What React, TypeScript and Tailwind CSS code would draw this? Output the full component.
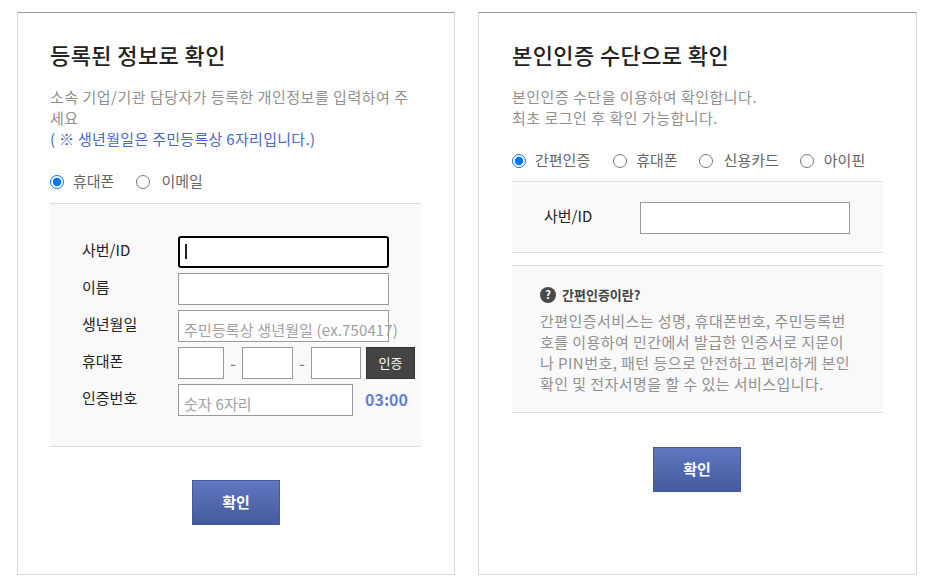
import type { ReactNode } from "react";

const font = "font-['Noto_Sans_CJK_KR','Noto_Sans',sans-serif]";

function Radio({ label, checked, name, className, labelClass = "ml-[9px]" }: { label: string; checked?: boolean; name: string; className?: string; labelClass?: string }) {
  return (
    <label className={`flex items-center text-[15px] text-[#666] ${className ?? ""}`}>
      <input type="radio" name={name} defaultChecked={checked} className="m-0 h-[14px] w-[14px]" />
      <span className={`leading-[16px] -mt-[3px] ${labelClass}`}>{label}</span>
    </label>
  );
}

function Field({ label, children }: { label: string; children: ReactNode }) {
  return (
    <div className="flex h-[32px] items-center">
      <span className="w-[96px] text-[15px] leading-[16px] -mt-[4px] text-[#222]">{label}</span>
      {children}
    </div>
  );
}

function TextBox({ className, hint }: { className: string; hint?: string }) {
  return (
    <div className={`relative h-[32px] shrink-0 border border-[#999] bg-white ${className}`}>
      {hint && (
        <span className="absolute left-[5px] top-[9px] whitespace-nowrap text-[15px] leading-[20px] tracking-[0.15px] text-[#a0a0a0]">{hint}</span>
      )}
    </div>
  );
}

function ConfirmButton() {
  return (
    <button className="flex h-[45px] w-[88px] items-center justify-center border border-[#46599f] bg-gradient-to-b from-[#5f78c0] to-[#465a9f] text-[15px] font-bold text-white">
      확인
    </button>
  );
}

export default function App() {
  return (
    <div className={`flex h-[587px] w-[939px] gap-[23px] bg-white pl-[17px] pt-[12px] ${font}`}>
      {/* 등록된 정보 */}
      <section className="flex h-[563px] w-[438px] flex-col border border-t-[#999] border-[#d9d9d9] pl-[32px]">
        <h2 className="mt-[26px] text-[22px] font-medium leading-[30px] tracking-[0.4px] text-[#222]">등록된 정보로 확인</h2>
        <p className="mt-[17px] w-[362px] text-[15px] leading-[21px] tracking-[0.5px] text-[#909090]">
          소속 기업/기관 담당자가 등록한 개인정보를 입력하여 주세요
          <br />
          <span className="tracking-[0.3px] text-[#4a68c4]">( ※ 생년월일은 주민등록상 6자리입니다.)</span>
        </p>
        <div className="mt-[23px] flex h-[20px] items-center">
          <Radio name="a" label="휴대폰" checked className="mr-[22px]" />
          <Radio name="a" label="이메일" labelClass="ml-[11px]" />
        </div>
        <div className="mt-[11px] flex h-[244px] w-[371px] flex-col gap-[5px] border-y border-[#ddd] bg-[#f9f9f9] pl-[32px] pt-[32px]">
          <Field label="사번/ID">
            <div className="relative h-[32px] w-[211px] rounded-[3px] border-2 border-black bg-white">
              <span className="absolute left-[5px] top-[6px] h-[15px] w-[2px] bg-[#222]" />
            </div>
          </Field>
          <Field label="이름">
            <TextBox className="w-[211px]" />
          </Field>
          <Field label="생년월일">
            <TextBox className="w-[211px]" hint="주민등록상 생년월일 (ex.750417)" />
          </Field>
          <Field label="휴대폰">
            <TextBox className="w-[46px]" />
            <span className="w-[18px] text-center text-[17px] text-[#777]">-</span>
            <TextBox className="w-[51px]" />
            <span className="w-[18px] text-center text-[17px] text-[#777]">-</span>
            <TextBox className="w-[50px]" />
            <button className="ml-[5px] h-[32px] w-[49px] shrink-0 border border-[#333] bg-[#444] text-[13px] text-white">인증</button>
          </Field>
          <Field label="인증번호">
            <TextBox className="w-[175px]" hint="숫자 6자리" />
            <span className="ml-[12px] text-[16px] font-bold -mt-[2px] text-[#6480cc]">03:00</span>
          </Field>
        </div>
        <div className="mt-[33px] ml-[142px]">
          <ConfirmButton />
        </div>
      </section>

      {/* 본인인증 수단 */}
      <section className="flex h-[563px] w-[439px] flex-col border border-t-[#999] border-[#d9d9d9] pl-[33px]">
        <h2 className="mt-[26px] text-[22px] font-medium leading-[30px] tracking-[0.4px] text-[#222]">본인인증 수단으로 확인</h2>
        <p className="mt-[17px] text-[15px] leading-[21px] tracking-[0.5px] text-[#909090]">
          본인인증 수단을 이용하여 확인합니다.
          <br />
          최초 로그인 후 확인 가능합니다.
        </p>
        <div className="mt-[23px] flex h-[20px] items-center">
          <Radio name="b" label="간편인증" checked className="mr-[23px]" />
          <Radio name="b" label="휴대폰" className="mr-[21px]" />
          <Radio name="b" label="신용카드" className="mr-[21px]" labelClass="ml-[11px]" />
          <Radio name="b" label="아이핀" labelClass="ml-[10px]" />
        </div>
        <div className="mt-[10px] flex h-[72px] w-[371px] items-center border-y border-[#ddd] bg-[#f9f9f9] pl-[32px] pt-[1px]">
          <span className="w-[96px] text-[15px] leading-[16px] -mt-[4px] text-[#222]">사번/ID</span>
          <TextBox className="w-[210px]" />
        </div>
        <div className="mt-[12px] h-[148px] w-[371px] border-y border-[#ddd] bg-[#f9f9f9] pl-[28px] pt-[19px]">
          <div className="flex h-[20px] items-center gap-[6px]">
            <svg width="16" height="16" viewBox="0 0 16 16">
              <circle cx="8" cy="8" r="8" fill="#4a4a4a" />
              <text x="8" y="12" textAnchor="middle" fontSize="11" fontWeight="700" fill="#fff">?</text>
            </svg>
            <span className="text-[13px] font-bold text-[#444]">간편인증이란?</span>
          </div>
          <p className="mt-[5px] w-[316px] text-[15px] leading-[21px] tracking-[0.45px] text-[#909090]">
            간편인증서비스는 성명, 휴대폰번호, 주민등록번호를 이용하여 민간에서 발급한 인증서로 지문이나 PIN번호, 패턴 등으로 안전하고 편리하게 본인확인 및 전자서명을 할 수 있는 서비스입니다.
          </p>
        </div>
        <div className="mt-[34px] ml-[141px]">
          <ConfirmButton />
        </div>
      </section>
    </div>
  );
}
